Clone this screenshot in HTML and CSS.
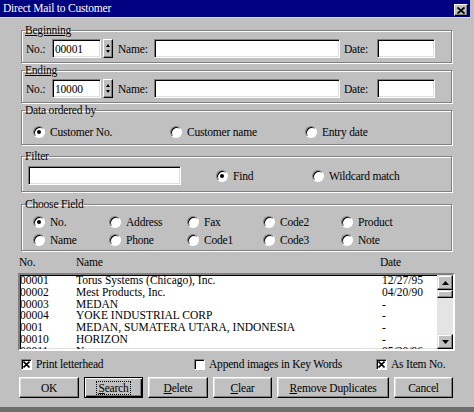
FILE: index.html
```
<!DOCTYPE html>
<html>
<head>
<meta charset="utf-8">
<link rel="stylesheet" href="styles.css">
</head>
<body>
<div class="window">
  <div class="titlebar">
    <span class="title">Direct Mail to Customer</span>
    <span class="close"><svg width="8" height="7" viewBox="0 0 8 7"><path d="M0.5 0.5 L7.5 6.5 M7.5 0.5 L0.5 6.5" stroke="#000" stroke-width="1.8"/></svg></span>
  </div>
  <div class="body">
    <fieldset class="group g-range">
      <legend><u>Beginning</u></legend>
      <div class="range-row">
        <span class="lbl-no">No.:</span>
        <span class="field f-no">00001</span>
        <span class="spin"><svg width="4" height="9" viewBox="0 0 4 9"><path d="M2 0 L4 3 L0 3 Z M0 6 L4 6 L2 9 Z" fill="#000"/></svg></span>
        <span class="lbl-name">Name:</span>
        <span class="field f-name"></span>
        <span class="lbl-date">Date:</span>
        <span class="field f-date"></span>
      </div>
    </fieldset>
    <fieldset class="group g-range">
      <legend><u>Ending</u></legend>
      <div class="range-row">
        <span class="lbl-no">No.:</span>
        <span class="field f-no">10000</span>
        <span class="spin"><svg width="4" height="9" viewBox="0 0 4 9"><path d="M2 0 L4 3 L0 3 Z M0 6 L4 6 L2 9 Z" fill="#000"/></svg></span>
        <span class="lbl-name">Name:</span>
        <span class="field f-name"></span>
        <span class="lbl-date">Date:</span>
        <span class="field f-date"></span>
      </div>
    </fieldset>
    <fieldset class="group g-order">
      <legend>Data ordered by</legend>
      <div class="order-row">
        <label class="radio r-w1"><i class="on"></i>Customer No.</label>
        <label class="radio r-w2"><i></i>Customer name</label>
        <label class="radio"><i></i>Entry date</label>
      </div>
    </fieldset>
    <fieldset class="group g-filter">
      <legend>Filter</legend>
      <div class="filter-row">
        <span class="field f-filter"></span>
        <label class="radio r-find"><i class="on"></i>Find</label>
        <label class="radio"><i></i>Wildcard match</label>
      </div>
    </fieldset>
    <fieldset class="group g-field">
      <legend>Choose Field</legend>
      <div class="field-grid">
        <label class="radio"><i class="on"></i>No.</label>
        <label class="radio"><i></i>Address</label>
        <label class="radio"><i></i>Fax</label>
        <label class="radio"><i></i>Code2</label>
        <label class="radio"><i></i>Product</label>
        <label class="radio"><i></i>Name</label>
        <label class="radio"><i></i>Phone</label>
        <label class="radio"><i></i>Code1</label>
        <label class="radio"><i></i>Code3</label>
        <label class="radio"><i></i>Note</label>
      </div>
    </fieldset>
    <div class="col-head">
      <span class="c-no">No.</span>
      <span class="c-name">Name</span>
      <span class="c-date">Date</span>
    </div>
    <div class="listbox">
      <div class="rows">
        <div class="row"><span class="c-no">00001</span><span class="c-name">Torus Systems (Chicago), Inc.</span><span class="c-date">12/27/95</span></div>
        <div class="row"><span class="c-no">00002</span><span class="c-name">Mest Products, Inc.</span><span class="c-date">04/20/90</span></div>
        <div class="row"><span class="c-no">00003</span><span class="c-name">MEDAN</span><span class="c-date">-</span></div>
        <div class="row"><span class="c-no">00004</span><span class="c-name">YOKE INDUSTRIAL CORP</span><span class="c-date">-</span></div>
        <div class="row"><span class="c-no">0001</span><span class="c-name">MEDAN, SUMATERA UTARA, INDONESIA</span><span class="c-date">-</span></div>
        <div class="row"><span class="c-no">00010</span><span class="c-name">HORIZON</span><span class="c-date">-</span></div>
        <div class="row"><span class="c-no">00011</span><span class="c-name">Nancy</span><span class="c-date">05/20/96</span></div>
      </div>
      <div class="scrollbar">
        <span class="sb-btn"><svg width="7" height="4" viewBox="0 0 7 4"><path d="M3.5 0 L7 4 L0 4 Z" fill="#000"/></svg></span>
        <span class="sb-track"><span class="sb-thumb"></span></span>
        <span class="sb-btn"><svg width="7" height="4" viewBox="0 0 7 4"><path d="M0 0 L7 0 L3.5 4 Z" fill="#000"/></svg></span>
      </div>
    </div>
    <div class="check-row">
      <label class="check ck-print"><i class="on"><svg width="7" height="7" viewBox="0 0 7 7"><path d="M0.5 0.5 L6.5 6.5 M6.5 0.5 L0.5 6.5" stroke="#000" stroke-width="1.6"/></svg></i>Print letterhead</label>
      <label class="check ck-append"><i></i>Append images in Key Words</label>
      <label class="check"><i class="on"><svg width="7" height="7" viewBox="0 0 7 7"><path d="M0.5 0.5 L6.5 6.5 M6.5 0.5 L0.5 6.5" stroke="#000" stroke-width="1.6"/></svg></i>As Item No.</label>
    </div>
    <div class="button-row">
      <span class="btn b-ok">OK</span>
      <span class="btn b-search default"><span class="focus"><u>S</u>earch</span></span>
      <span class="btn b-delete"><u>D</u>elete</span>
      <span class="btn b-clear"><u>C</u>lear</span>
      <span class="btn b-remove"><u>R</u>emove Duplicates</span>
      <span class="btn b-cancel">Cancel</span>
    </div>
  </div>
</div>
</body>
</html>
```
FILE: styles.css
```
html, body {
  margin: 0;
  padding: 0;
  background: #c0c0c0;
  overflow: hidden;
}

.window {
  width: 474px;
  height: 412px;
  box-sizing: border-box;
  background: #c0c0c0;
  border-bottom: 5px solid #6e6e6e;
  font-family: "Liberation Serif", "Times New Roman", serif;
  font-size: 11.5px;
  letter-spacing: -0.2px;
  color: #000;
  display: flex;
  flex-direction: column;
  overflow: hidden;
}

.titlebar {
  height: 18px;
  margin-right: 4px;
  background: #000080;
  color: #fff;
  display: flex;
  justify-content: space-between;
  align-items: flex-start;
  padding: 0 2px 0 3px;
  box-sizing: border-box;
  flex: none;
  border-bottom: 1px solid #dfdfdf;
}

.title {
  line-height: 17px;
}

.close {
  margin-top: 4px;
  width: 14px;
  height: 12px;
  box-sizing: border-box;
  background: #c0c0c0;
  border: 1px solid;
  border-color: #fff #000 #000 #fff;
  box-shadow: inset -1px -1px 0 #808080;
  display: flex;
  align-items: center;
  justify-content: center;
}

.body {
  padding-left: 18px;
  display: flex;
  flex-direction: column;
  flex: 1;
}

.group {
  margin: 0 0 0 3px;
  width: 431px;
  box-sizing: border-box;
  border: 1px solid #808080;
  box-shadow: 1px 1px 0 #fff, inset 1px 1px 0 #fff;
  padding: 0 4px;
  min-width: 0;
}

.group legend {
  padding: 0;
  margin-left: -1px;
  line-height: 14px;
}

.g-range {
  padding-top: 2px;
  padding-bottom: 4px;
}

.g-range:first-child {
  margin-top: 5px;
}

.range-row {
  display: flex;
  align-items: center;
  height: 19px;
}

.field {
  display: flex;
  align-items: center;
  background: #fff;
  height: 19px;
  box-sizing: border-box;
  border: 1px solid;
  border-color: #808080 #fff #fff #808080;
  box-shadow: inset 1px 1px 0 #000, inset -1px -1px 0 #dfdfdf;
  padding-left: 2px;
}

.lbl-no { width: 26px; }
.f-no { width: 49px; }
.spin {
  margin-left: 2px;
  width: 10px;
  height: 19px;
  box-sizing: border-box;
  background: #c0c0c0;
  border: 1px solid;
  border-color: #fff #000 #000 #fff;
  box-shadow: inset -1px -1px 0 #808080;
  display: flex;
  align-items: center;
  justify-content: center;
}
.lbl-name { margin-left: 5px; width: 36px; }
.f-name { width: 186px; }
.lbl-date { margin-left: 4px; width: 33px; }
.f-date { width: 58px; }

.radio {
  display: inline-flex;
  align-items: center;
  line-height: 14px;
  white-space: nowrap;
}

.radio i {
  width: 12px;
  height: 12px;
  box-sizing: border-box;
  border-radius: 50%;
  background: #fff;
  border: 1px solid;
  border-color: #808080 #fff #fff #808080;
  box-shadow: inset 1px 1px 0 #000;
  margin-right: 5px;
  display: flex;
  align-items: center;
  justify-content: center;
  flex: none;
}

.radio i.on::after {
  content: "";
  width: 4px;
  height: 4px;
  border-radius: 50%;
  background: #000;
}

.g-order {
  padding-top: 8px;
  padding-bottom: 6px;
}

.order-row {
  display: flex;
  height: 13px;
  align-items: center;
  padding-left: 7px;
}

.r-w1 { width: 137px; }
.r-w2 { width: 135px; }

.g-filter {
  margin-top: 4px;
  padding-top: 3px;
  padding-bottom: 6px;
}

.filter-row {
  display: flex;
  align-items: center;
}

.f-filter {
  margin-left: 2px;
  width: 153px;
}

.r-find {
  margin-left: 35px;
  width: 96px;
}

.g-field {
  margin-top: 5px;
  padding-top: 2px;
  padding-bottom: 1px;
}

.field-grid {
  display: grid;
  grid-template-columns: 76px 78px 76px 78px auto;
  grid-auto-rows: 18px;
  align-items: center;
  padding-left: 7px;
}

.col-head {
  margin-top: 4px;
  display: flex;
  line-height: 14px;
  padding-left: 1px;
}

.col-head .c-no { width: 57px; }
.col-head .c-name { width: 304px; }

.listbox {
  margin-top: 4px;
  width: 437px;
  height: 78px;
  box-sizing: border-box;
  background: #fff;
  border: 2px solid;
  border-color: #808080 #fff #fff #808080;
  box-shadow: inset 1px 1px 0 #000, inset -1px -1px 0 #dfdfdf;
  display: flex;
  overflow: hidden;
  letter-spacing: 0;
}

.rows {
  flex: 1;
  overflow: hidden;
}

.row {
  display: flex;
  line-height: 11.8px;
  white-space: nowrap;
}

.row .c-no { width: 56px; }
.row .c-name { width: 306px; }

.scrollbar {
  width: 16px;
  display: flex;
  flex-direction: column;
  background: #e4e4e4;
  flex: none;
}

.sb-btn {
  height: 15px;
  box-sizing: border-box;
  background: #c0c0c0;
  border: 1px solid;
  border-color: #dfdfdf #000 #000 #dfdfdf;
  box-shadow: inset -1px -1px 0 #808080, inset 1px 1px 0 #fff;
  display: flex;
  align-items: center;
  justify-content: center;
  flex: none;
}

.sb-track {
  flex: 1;
}

.sb-thumb {
  display: block;
  height: 8px;
  box-sizing: border-box;
  background: #c0c0c0;
  border: 1px solid;
  border-color: #dfdfdf #000 #000 #dfdfdf;
  box-shadow: inset -1px -1px 0 #808080, inset 1px 1px 0 #fff;
}

.check-row {
  margin-top: 6px;
  display: flex;
  height: 14px;
  align-items: center;
  padding-left: 3px;
}

.check {
  display: inline-flex;
  align-items: center;
  white-space: nowrap;
  line-height: 14px;
}

.check i {
  width: 11px;
  height: 11px;
  box-sizing: border-box;
  background: #fff;
  border: 1px solid;
  border-color: #808080 #fff #fff #808080;
  box-shadow: inset 1px 1px 0 #000;
  margin-right: 4px;
  display: flex;
  align-items: center;
  justify-content: center;
  flex: none;
}

.ck-print { width: 173px; }
.ck-append { width: 182px; }

.button-row {
  margin-top: 6px;
  display: flex;
  gap: 5px;
  padding-left: 1px;
}

.btn {
  height: 21px;
  box-sizing: border-box;
  background: #c0c0c0;
  border: 1px solid;
  border-color: #fff #000 #000 #fff;
  box-shadow: inset -1px -1px 0 #808080, inset 1px 1px 0 #dfdfdf;
  display: flex;
  align-items: center;
  justify-content: center;
}

.btn.default {
  border-color: #000;
  box-shadow: inset 1px 1px 0 #fff, inset -1px -1px 0 #000, inset -2px -2px 0 #808080;
}

.focus {
  outline: 1px dotted #000;
  outline-offset: 0;
  padding: 0 1px;
  line-height: 12px;
}

.b-ok { width: 60px; }
.b-search { width: 59px; }
.b-delete { width: 60px; }
.b-clear { width: 59px; }
.b-remove { width: 112px; }
.b-cancel { width: 59px; }
```
